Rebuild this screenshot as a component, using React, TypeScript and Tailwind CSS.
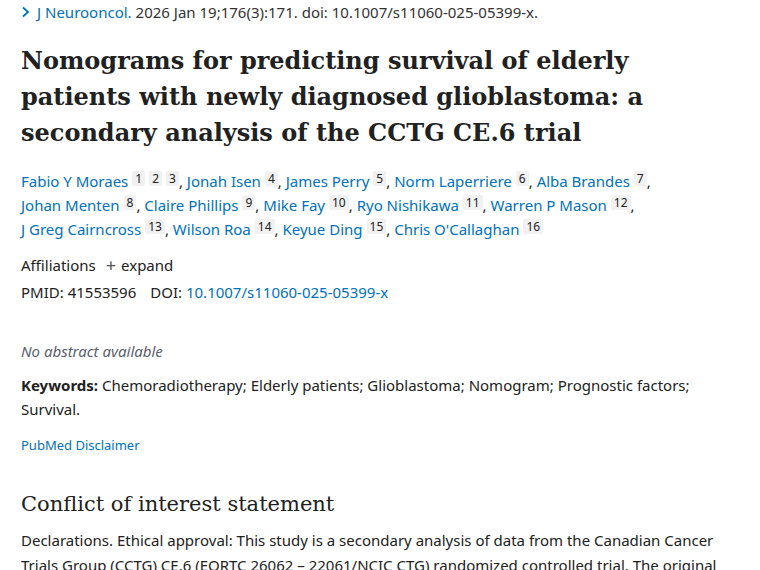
import React from 'react'

const authors: [string, string[]][] = [
    ['Fabio Y Moraes', ['1', '2', '3']],
    ['Jonah Isen', ['4']],
    ['James Perry', ['5']],
    ['Norm Laperriere', ['6']],
    ['Alba Brandes', ['7']],
    ['Johan Menten', ['8']],
    ['Claire Phillips', ['9']],
    ['Mike Fay', ['10']],
    ['Ryo Nishikawa', ['11']],
    ['Warren P Mason', ['12']],
    ['J Greg Cairncross', ['13']],
    ['Wilson Roa', ['14']],
    ['Keyue Ding', ['15']],
    ["Chris O'Callaghan", ['16']],
]

export default function App() {
    return (
        <div className="min-h-[570px] bg-white px-[21px] text-[#212121]" style={{ fontFamily: '"Noto Sans", sans-serif' }}>
            <div className="flex items-center h-[24px] text-[15px] text-[#212121]">
                <svg width="10" height="12" viewBox="0 0 10 12" className="mr-[6px]">
                    <path d="M2 1.5 L7 6 L2 10.5" fill="none" stroke="#0071bc" strokeWidth="1.8" />
                </svg>
                <span className="text-[#0071bc]">J Neurooncol.</span>
                <span className="ml-[4px] text-[#333]">2026 Jan 19;176(3):171. doi: 10.1007/s11060-025-05399-x.</span>
            </div>

            <h1 className="mt-[19px] max-w-[660px] text-[24px] leading-[36px] font-bold text-[#212121]" style={{ fontFamily: '"DejaVu Serif", serif' }}>
                Nomograms for predicting survival of elderly patients with newly diagnosed glioblastoma: a secondary analysis of the CCTG CE.6 trial
            </h1>

            <div className="mt-[18px] max-w-[660px] text-[15px] leading-[24px]">
                {authors.map(([name, refs], i) => (
                    <React.Fragment key={name}>
                        <span className="whitespace-nowrap">
                            <span className="text-[#0071bc]">{name}</span>
                            {refs.map((r) => (
                                <span key={r} className="ml-[4px] inline-block align-[4px] bg-[#f1f1f1] rounded-[2px] px-[3px] text-[12px] leading-[15px] text-[#212121]">
                                    {r}
                                </span>
                            ))}
                            {i < authors.length - 1 && ','}
                        </span>
                        {i < authors.length - 1 && ' '}
                    </React.Fragment>
                ))}
            </div>

            <div className="mt-[12px] text-[15px] leading-[24px] flex items-center">
                <span>Affiliations</span>
                <span className="ml-[10px] text-[18px] leading-none text-[#555]">+</span>
                <span className="ml-[5px]">expand</span>
            </div>
            <div className="mt-[3px] text-[15px] leading-[24px]">
                <span>PMID: 41553596</span>
                <span className="ml-[14px]">DOI: </span>
                <span className="text-[#0071bc]">10.1007/s11060-025-05399-x</span>
            </div>

            <div className="mt-[35px] text-[15px] leading-[24px] italic text-[#5b616b]">No abstract available</div>

            <div className="mt-[10px] text-[15px] leading-[24px]">
                <span className="font-bold">Keywords:</span> Chemoradiotherapy; Elderly patients; Glioblastoma; Nomogram; Prognostic factors; Survival.
            </div>

            <div className="mt-[14px] text-[13px] leading-[20px] text-[#0071bc]">PubMed Disclaimer</div>

            <h2 className="mt-[34px] text-[21px] leading-[30px] text-[#212121]" style={{ fontFamily: '"DejaVu Serif", serif' }}>
                Conflict of interest statement
            </h2>

            <p className="mt-[9px] text-[15px] leading-[25px]">
                Declarations. Ethical approval: This study is a secondary analysis of data from the Canadian Cancer Trials Group (CCTG) CE.6 (EORTC 26062 – 22061/NCIC CTG) randomized controlled trial. The original
            </p>
        </div>
    )
}
